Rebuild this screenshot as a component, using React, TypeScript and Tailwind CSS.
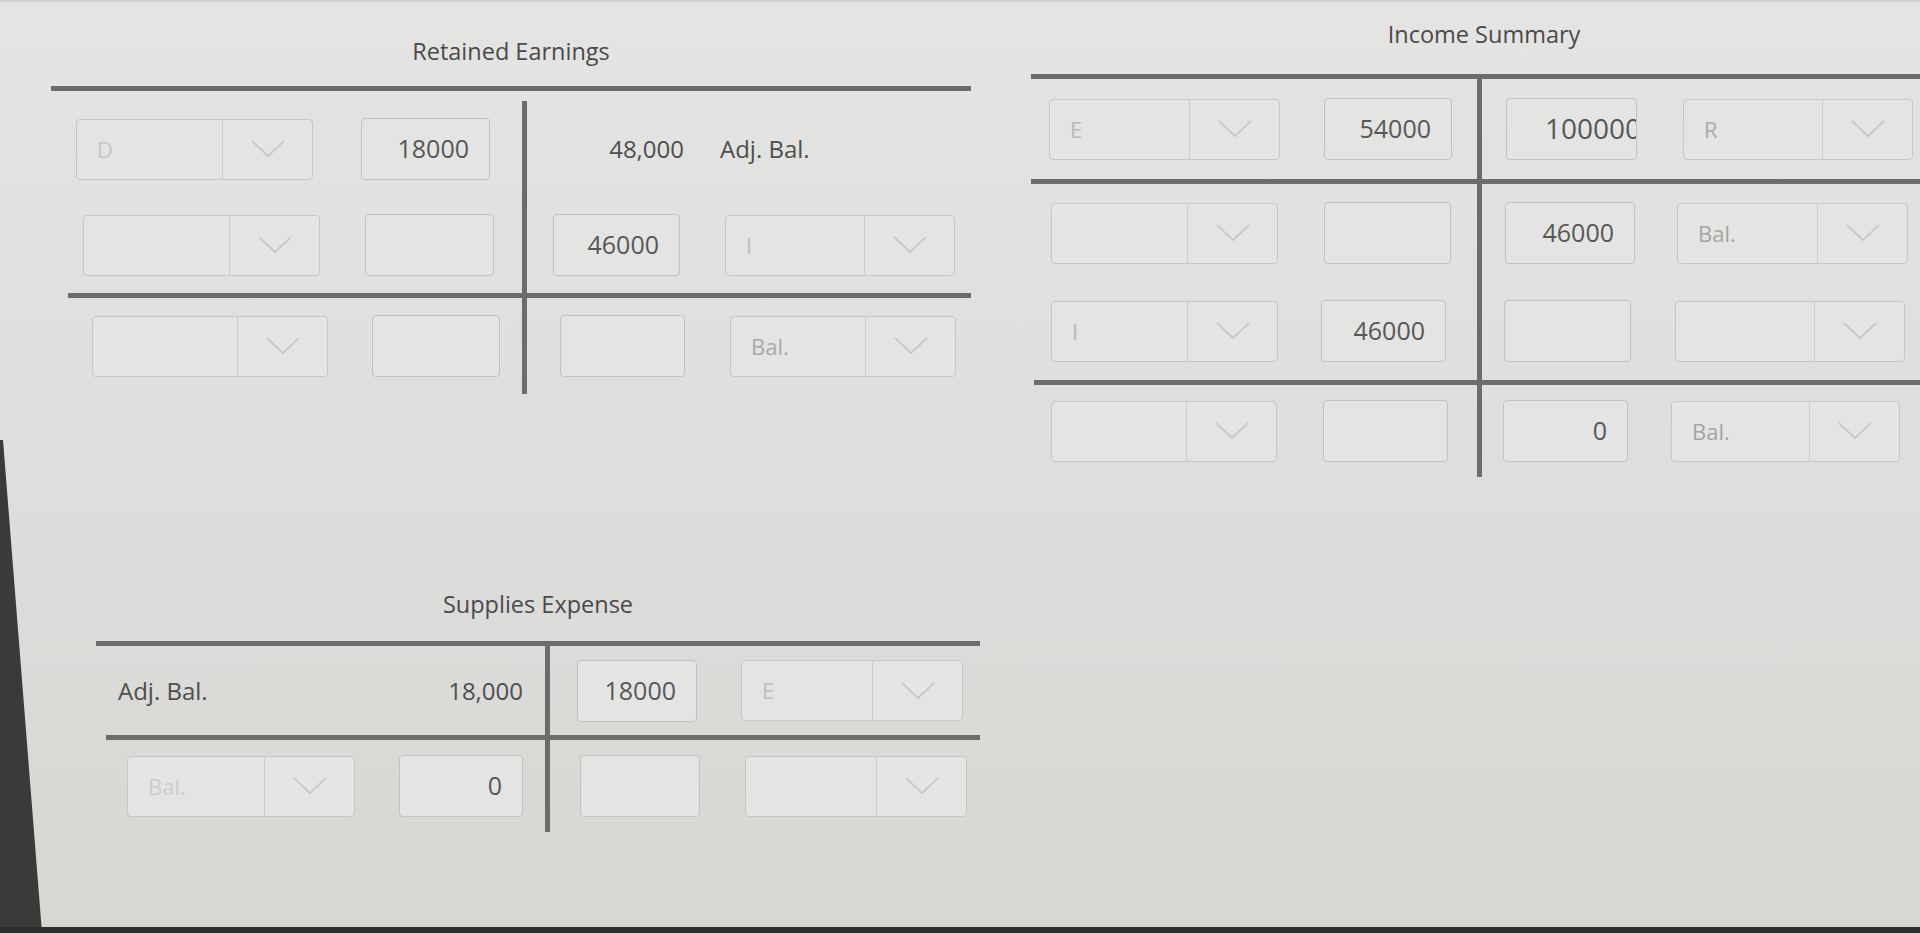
import React from "react";

type Box = { w: string; text?: string; tone?: string };

const Chevron = () => (
  <svg width="36" height="20" viewBox="0 0 36 20">
    <path d="M2 2 L18 17 L34 2" fill="none" stroke="#c4c4c2" strokeWidth="1.7" />
  </svg>
);

const Dropdown = ({ w, text, tone = "text-[#b4b4b2]" }: Box) => (
  <div className={`flex h-[61px] shrink-0 rounded-[4px] border border-[#c6c6c4] bg-[#e4e4e2] ${w}`}>
    <div className={`flex flex-1 items-center pl-5 text-[22px] ${tone}`}>{text}</div>
    <div className="flex w-[90px] items-center justify-center border-l border-[#cdcdcb]">
      <Chevron />
    </div>
  </div>
);

const Input = ({ w, text }: Box) => (
  <div
    className={`flex h-[62px] shrink-0 items-center justify-end overflow-hidden whitespace-nowrap rounded-[4px] border border-[#c2c2c0] bg-[#e4e4e2] pr-[20px] text-[25px] text-[#575757] ${w}`}
  >
    {text}
  </div>
);

const Bar = () => <div className="h-[5px] w-full bg-[#6c6c6a]" />;
const VLine = () => <div className="w-[5px] shrink-0 bg-[#6c6c6a]" />;

const Title = ({ children }: { children: React.ReactNode }) => (
  <div className="text-center text-[23.5px] leading-[30px] text-[#4a4a4a]">{children}</div>
);

export default function App() {
  return (
    <div className="relative h-[933px] w-[1920px] overflow-hidden bg-gradient-to-b from-[#e4e4e2] via-[#dededc] to-[#d7d6d3] font-['Open_Sans',sans-serif]">
      <div className="h-[2px] w-full bg-[#cfcfcd]" />
      <div className="flex">
        {/* left column */}
        <div className="w-[1000px] shrink-0">
          {/* Retained Earnings */}
          <div className="ml-[51px] mt-[34px] w-[920px]">
            <Title>Retained Earnings</Title>
            <div className="mt-[20px]">
              <Bar />
            </div>
            <div className="flex pt-[10px]">
              <div className="w-[471px] shrink-0">
                <div className="flex h-[96px] items-center gap-[48px] pl-[25px]">
                  <Dropdown w="w-[237px]" text="D" tone="text-[#c4c4c2]" />
                  <Input w="w-[129px]" text="18000" />
                </div>
                <div className="flex h-[96px] items-center gap-[45px] pl-[32px]">
                  <Dropdown w="w-[237px]" />
                  <Input w="w-[129px]" />
                </div>
              </div>
              <VLine />
              <div className="flex-1">
                <div className="flex h-[96px] items-center gap-[36px] pl-[26px] text-[24px] text-[#4e4e4e]">
                  <div className="w-[131px] text-right">48,000</div>
                  <div>Adj. Bal.</div>
                </div>
                <div className="flex h-[96px] items-center gap-[45px] pl-[26px]">
                  <Input w="w-[127px]" text="46000" />
                  <Dropdown w="w-[230px]" text="I" tone="text-[#bdbdbb]" />
                </div>
              </div>
            </div>
            <div className="flex">
              <div className="ml-[17px] w-[454px] shrink-0">
                <Bar />
              </div>
              <div className="flex-1">
                <Bar />
              </div>
            </div>
            <div className="flex">
              <div className="w-[471px] shrink-0">
                <div className="flex h-[96px] items-center gap-[44px] pl-[41px]">
                  <Dropdown w="w-[236px]" />
                  <Input w="w-[128px]" />
                </div>
              </div>
              <VLine />
              <div className="flex-1">
                <div className="flex h-[96px] items-center gap-[45px] pl-[33px]">
                  <Input w="w-[125px]" />
                  <Dropdown w="w-[226px]" text="Bal." tone="text-[#a9a9a7]" />
                </div>
              </div>
            </div>
          </div>

          {/* Supplies Expense */}
          <div className="ml-[96px] mt-[195px] w-[884px]">
            <Title>Supplies Expense</Title>
            <div className="mt-[22px]">
              <Bar />
            </div>
            <div className="flex">
              <div className="flex h-[89px] w-[449px] shrink-0 items-center justify-between px-[22px] text-[24px] text-[#4e4e4e]">
                <span>Adj. Bal.</span>
                <span>18,000</span>
              </div>
              <VLine />
              <div className="flex flex-1 items-center gap-[44px] pl-[27px]">
                <Input w="w-[120px]" text="18000" />
                <Dropdown w="w-[222px]" text="E" tone="text-[#bdbdbb]" />
              </div>
            </div>
            <div className="flex">
              <div className="ml-[10px] w-[439px] shrink-0">
                <Bar />
              </div>
              <div className="flex-1">
                <Bar />
              </div>
            </div>
            <div className="flex">
              <div className="flex h-[92px] w-[449px] shrink-0 items-center gap-[44px] pl-[31px]">
                <Dropdown w="w-[228px]" text="Bal." tone="text-[#cdcdcb]" />
                <Input w="w-[124px]" text="0" />
              </div>
              <VLine />
              <div className="flex flex-1 items-center gap-[45px] pl-[30px]">
                <Input w="w-[120px]" />
                <Dropdown w="w-[222px]" />
              </div>
            </div>
          </div>
        </div>

        {/* right column: Income Summary */}
        <div className="ml-[31px] mt-[17px] w-[906px] shrink-0">
          <Title>Income Summary</Title>
          <div className="mt-[25px]">
            <Bar />
          </div>
          <div className="flex">
            <div className="flex h-[100px] w-[446px] shrink-0 items-center gap-[44px] pl-[18px]">
              <Dropdown w="w-[231px]" text="E" tone="text-[#b8b8b6]" />
              <Input w="w-[128px]" text="54000" />
            </div>
            <VLine />
            <div className="flex flex-1 items-center gap-[46px] pl-[24px]">
              <div className="h-[62px] w-[131px] shrink-0 overflow-hidden whitespace-nowrap rounded-[4px] border border-[#c2c2c0] bg-[#e4e4e2] pl-[38px] text-[28px] leading-[58px] text-[#575757]">
                100000
              </div>
              <Dropdown w="w-[230px]" text="R" tone="text-[#acacaa]" />
            </div>
          </div>
          <Bar />
          <div className="flex">
            <div className="w-[446px] shrink-0">
              <div className="flex h-[98px] items-center gap-[46px] pl-[20px]">
                <Dropdown w="w-[227px]" />
                <Input w="w-[127px]" />
              </div>
              <div className="flex h-[98px] items-center gap-[43px] pl-[20px]">
                <Dropdown w="w-[227px]" text="I" tone="text-[#b8b8b6]" />
                <Input w="w-[125px]" text="46000" />
              </div>
            </div>
            <VLine />
            <div className="flex-1">
              <div className="flex h-[98px] items-center gap-[42px] pl-[23px]">
                <Input w="w-[130px]" text="46000" />
                <Dropdown w="w-[231px]" text="Bal." tone="text-[#a4a4a2]" />
              </div>
              <div className="flex h-[98px] items-center gap-[44px] pl-[22px]">
                <Input w="w-[127px]" />
                <Dropdown w="w-[230px]" />
              </div>
            </div>
          </div>
          <div className="ml-[3px]">
            <Bar />
          </div>
          <div className="flex">
            <div className="flex h-[92px] w-[446px] shrink-0 items-center gap-[46px] pl-[20px]">
              <Dropdown w="w-[226px]" />
              <Input w="w-[125px]" />
            </div>
            <VLine />
            <div className="flex flex-1 items-center gap-[43px] pl-[21px]">
              <Input w="w-[125px]" text="0" />
              <Dropdown w="w-[229px]" text="Bal." tone="text-[#a4a4a2]" />
            </div>
          </div>
        </div>
      </div>

      {/* monitor bezel and taskbar edge seen in the photo */}
      <svg className="absolute left-0 top-0" width="60" height="933" viewBox="0 0 60 933">
        <polygon points="0,440 3,440 42,933 0,933" fill="#3a3a39" />
      </svg>
      <div className="absolute bottom-0 left-0 h-[6px] w-full bg-[#2e2e2e]" />
    </div>
  );
}
